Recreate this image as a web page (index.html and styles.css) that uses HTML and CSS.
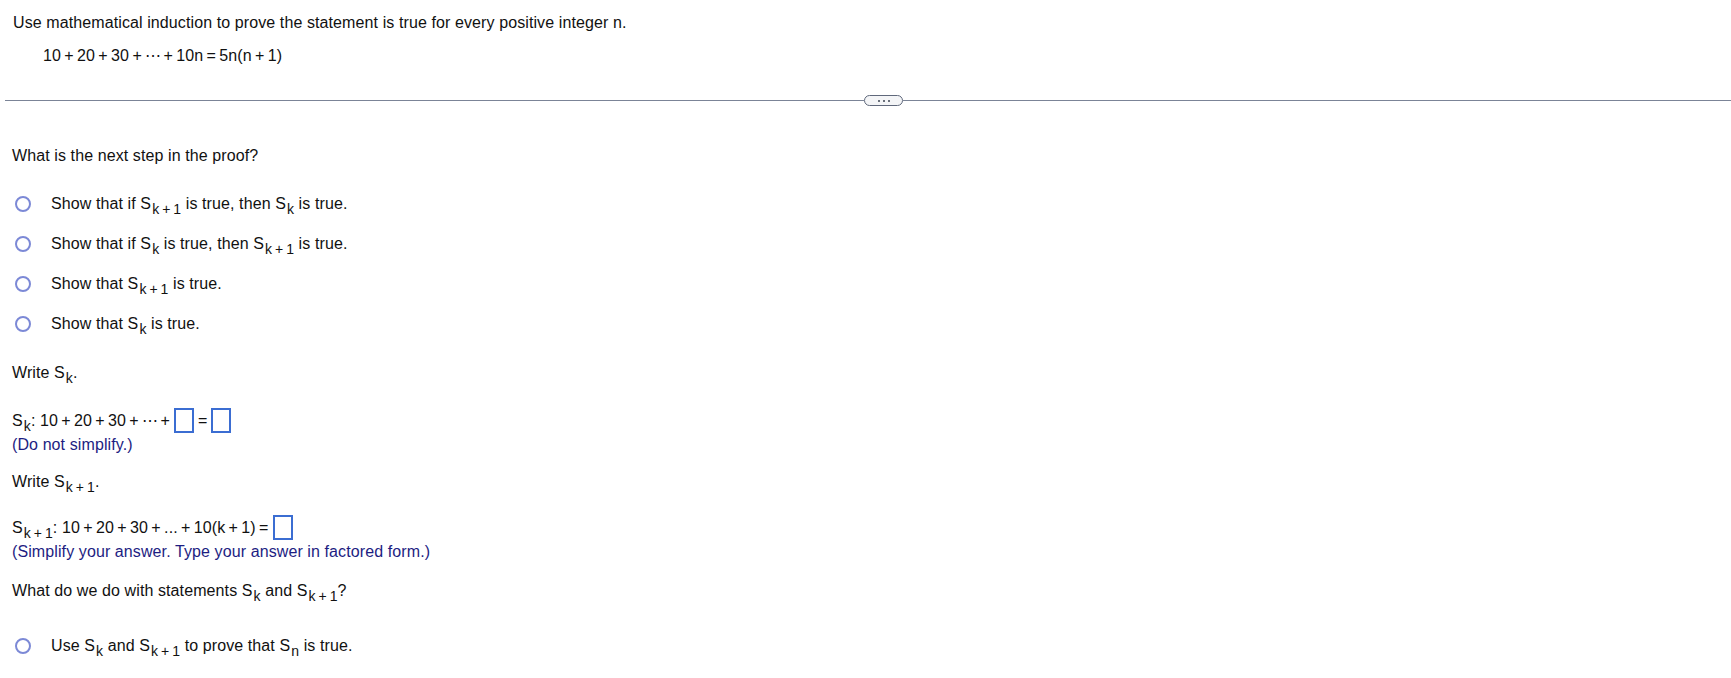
FILE: index.html
```html
<!DOCTYPE html>
<html lang="en">
<head>
<meta charset="utf-8">
<title>Induction</title>
<link rel="stylesheet" href="styles.css">
</head>
<body>
<div class="top">
  <p class="q">Use mathematical induction to prove the statement is true for every positive integer n.</p>
  <p class="eq">10&#8201;+&#8201;20&#8201;+&#8201;30&#8201;+&#8201;<span class="dots">&#8943;</span>&#8201;+&#8201;10n&#8201;=&#8201;5n(n&#8201;+&#8201;1)</p>
</div>
<div class="divider">
  <span class="line line-left"></span>
  <span class="more"><i></i><i></i><i></i></span>
  <span class="line line-right"></span>
</div>
<div class="content">
  <p class="prompt first">What is the next step in the proof?</p>
  <ul class="options">
    <li><span class="radio"></span><span>Show that if S<sub>k&#8201;+&#8201;1</sub> is true, then S<sub>k</sub> is true.</span></li>
    <li><span class="radio"></span><span>Show that if S<sub>k</sub> is true, then S<sub>k&#8201;+&#8201;1</sub> is true.</span></li>
    <li><span class="radio"></span><span>Show that S<sub>k&#8201;+&#8201;1</sub> is true.</span></li>
    <li><span class="radio"></span><span>Show that S<sub>k</sub> is true.</span></li>
  </ul>
  <p class="prompt write1">Write S<sub>k</sub>.</p>
  <p class="formula f1">S<sub>k</sub>: 10&#8201;+&#8201;20&#8201;+&#8201;30&#8201;+&#8201;<span class="dots">&#8943;</span>&#8201;+<span class="box"></span>=<span class="box"></span></p>
  <p class="hint">(Do not simplify.)</p>
  <p class="prompt write2">Write S<sub>k&#8201;+&#8201;1</sub>.</p>
  <p class="formula f2">S<sub>k&#8201;+&#8201;1</sub>: 10&#8201;+&#8201;20&#8201;+&#8201;30&#8201;+&#8201;...&#8201;+&#8201;10(k&#8201;+&#8201;1)&#8201;=<span class="box"></span></p>
  <p class="hint">(Simplify your answer. Type your answer in factored form.)</p>
  <p class="prompt what">What do we do with statements S<sub>k</sub> and S<sub>k&#8201;+&#8201;1</sub>?</p>
  <ul class="options last">
    <li><span class="radio"></span><span>Use S<sub>k</sub> and S<sub>k&#8201;+&#8201;1</sub> to prove that S<sub>n</sub> is true.</span></li>
  </ul>
</div>
</body>
</html>
```

FILE: styles.css
```css
html, body {
  margin: 0;
  padding: 0;
  background: #ffffff;
}
body {
  font-family: "Liberation Sans", Arial, sans-serif;
  font-size: 16px;
  line-height: 20px;
  letter-spacing: 0.1px;
  color: #111111;
}
p {
  margin: 0;
}
sub {
  font-size: 14px;
  line-height: 0;
  vertical-align: -5px;
  margin-left: 1px;
}
.dots {
  letter-spacing: -1px;
}
.top {
  padding: 13px 0 0 13px;
}
.eq {
  margin-top: 13px;
  padding-left: 30px;
}
.divider {
  display: flex;
  align-items: center;
  margin-top: 29px;
  height: 11px;
}
.line {
  height: 1px;
  background: #7b8497;
}
.line-left {
  margin-left: 5px;
  width: 859px;
}
.line-right {
  flex: 1;
}
.more {
  box-sizing: border-box;
  width: 39px;
  height: 11px;
  border: 1px solid #5f687b;
  border-radius: 6px;
  background: #f4f5f7;
  display: flex;
  align-items: center;
  justify-content: center;
  gap: 3px;
}
.more i {
  width: 2px;
  height: 2px;
  background: #3c4352;
  border-radius: 1px;
}
.content {
  padding-left: 12px;
}
.first {
  margin-top: 40px;
}
.options {
  list-style: none;
  margin: 28px 0 0 0;
  padding: 0;
  display: flex;
  flex-direction: column;
  gap: 20px;
}
.options li {
  display: flex;
  align-items: center;
  height: 20px;
}
.radio {
  box-sizing: border-box;
  width: 16px;
  height: 16px;
  border: 2px solid #7c89d6;
  border-radius: 50%;
  margin: 0 20px 0 3px;
  flex: none;
}
.write1 {
  margin-top: 29px;
}
.formula {
  height: 25px;
  line-height: 25px;
  white-space: pre;
}
.f1 {
  margin-top: 25px;
}
.f2 {
  margin-top: 23px;
}
.box {
  box-sizing: border-box;
  display: inline-block;
  width: 20px;
  height: 25px;
  border: 2px solid #3b6dd2;
  margin: 0 4px;
  vertical-align: middle;
  position: relative;
  top: -1px;
}
.hint {
  margin-top: 2px;
  color: #1d1d82;
}
.write2 {
  margin-top: 17px;
}
.what {
  margin-top: 19px;
}
.options.last {
  margin-top: 35px;
}
```
